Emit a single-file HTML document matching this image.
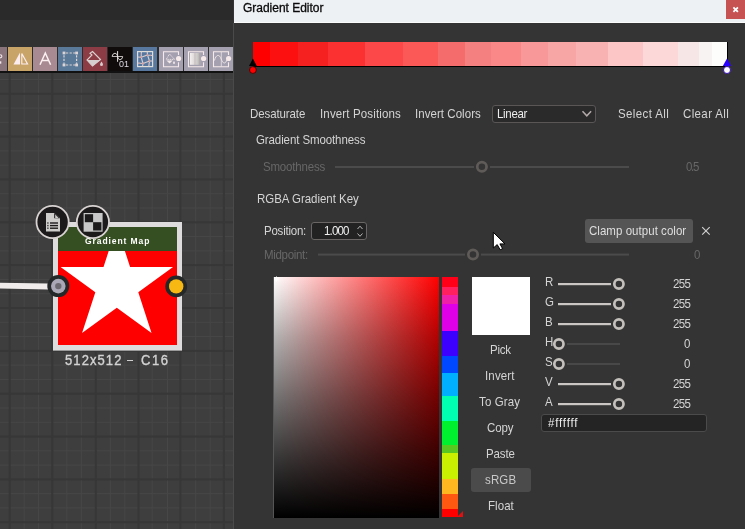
<!DOCTYPE html>
<html><head><meta charset="utf-8"><style>
html,body{margin:0;padding:0;width:745px;height:529px;overflow:hidden;background:#343434;position:relative}
.t{position:absolute;white-space:pre;font-family:"Liberation Sans",sans-serif;will-change:transform}
</style></head><body>
<div style='position:absolute;left:0;top:0;width:233px;height:20px;background:#2b2a2a'></div>
<div style='position:absolute;left:0;top:20px;width:233px;height:27px;background:#323232'></div>
<div style='position:absolute;left:0;top:47px;width:233px;height:24px;background:#2c2c2c'></div>
<div style='position:absolute;left:0;top:71px;width:233px;height:2px;background:#121212'></div>
<svg style='position:absolute;left:0;top:0' width='233' height='529'><rect x='0' y='73' width='233' height='456' fill='#3e3e3e'/><rect x='23.70' y='73' width='1' height='456' fill='#474747'/>
<rect x='38.10' y='73' width='1' height='456' fill='#474747'/>
<rect x='66.30' y='73' width='1' height='456' fill='#474747'/>
<rect x='80.80' y='73' width='1' height='456' fill='#474747'/>
<rect x='109.80' y='73' width='1' height='456' fill='#474747'/>
<rect x='124.30' y='73' width='1' height='456' fill='#474747'/>
<rect x='151.70' y='73' width='1' height='456' fill='#474747'/>
<rect x='167.00' y='73' width='1' height='456' fill='#474747'/>
<rect x='195.20' y='73' width='1' height='456' fill='#474747'/>
<rect x='209.70' y='73' width='1' height='456' fill='#474747'/>
<rect x='0' y='79.02' width='233' height='1' fill='#474747'/>
<rect x='0' y='107.58' width='233' height='1' fill='#474747'/>
<rect x='0' y='121.86' width='233' height='1' fill='#474747'/>
<rect x='0' y='150.42' width='233' height='1' fill='#474747'/>
<rect x='0' y='164.70' width='233' height='1' fill='#474747'/>
<rect x='0' y='193.26' width='233' height='1' fill='#474747'/>
<rect x='0' y='207.54' width='233' height='1' fill='#474747'/>
<rect x='0' y='236.10' width='233' height='1' fill='#474747'/>
<rect x='0' y='250.38' width='233' height='1' fill='#474747'/>
<rect x='0' y='278.94' width='233' height='1' fill='#474747'/>
<rect x='0' y='293.22' width='233' height='1' fill='#474747'/>
<rect x='0' y='321.78' width='233' height='1' fill='#474747'/>
<rect x='0' y='336.06' width='233' height='1' fill='#474747'/>
<rect x='0' y='364.62' width='233' height='1' fill='#474747'/>
<rect x='0' y='378.90' width='233' height='1' fill='#474747'/>
<rect x='0' y='407.46' width='233' height='1' fill='#474747'/>
<rect x='0' y='421.74' width='233' height='1' fill='#474747'/>
<rect x='0' y='450.30' width='233' height='1' fill='#474747'/>
<rect x='0' y='464.58' width='233' height='1' fill='#474747'/>
<rect x='0' y='493.14' width='233' height='1' fill='#474747'/>
<rect x='0' y='507.42' width='233' height='1' fill='#474747'/>
<rect x='8.70' y='73' width='2' height='456' fill='#373737'/>
<rect x='51.30' y='73' width='2' height='456' fill='#373737'/>
<rect x='94.80' y='73' width='2' height='456' fill='#373737'/>
<rect x='137.50' y='73' width='2' height='456' fill='#373737'/>
<rect x='179.40' y='73' width='2' height='456' fill='#373737'/>
<rect x='222.90' y='73' width='2' height='456' fill='#373737'/>
<rect x='0' y='92.80' width='233' height='2' fill='#373737'/>
<rect x='0' y='135.64' width='233' height='2' fill='#373737'/>
<rect x='0' y='178.48' width='233' height='2' fill='#373737'/>
<rect x='0' y='221.32' width='233' height='2' fill='#373737'/>
<rect x='0' y='264.16' width='233' height='2' fill='#373737'/>
<rect x='0' y='307.00' width='233' height='2' fill='#373737'/>
<rect x='0' y='349.84' width='233' height='2' fill='#373737'/>
<rect x='0' y='392.68' width='233' height='2' fill='#373737'/>
<rect x='0' y='435.52' width='233' height='2' fill='#373737'/>
<rect x='0' y='478.36' width='233' height='2' fill='#373737'/>
<rect x='0' y='521.20' width='233' height='2' fill='#373737'/></svg>
<div style='position:absolute;left:-17px;top:47px;width:24px;height:24px;background:#8a747c'></div>
<div style='position:absolute;left:8px;top:47px;width:24px;height:24px;background:#c8a468'></div>
<div style='position:absolute;left:33px;top:47px;width:24px;height:24px;background:#a88a92'></div>
<div style='position:absolute;left:58px;top:47px;width:24px;height:24px;background:#5a7898'></div>
<div style='position:absolute;left:83px;top:47px;width:24px;height:24px;background:#8c3c44'></div>
<div style='position:absolute;left:108px;top:47px;width:24px;height:24px;background:#100c0c'></div>
<div style='position:absolute;left:133px;top:47px;width:24px;height:24px;background:#5878a0'></div>
<div style='position:absolute;left:159px;top:47px;width:24px;height:24px;background:#a4a0b0'></div>
<div style='position:absolute;left:184px;top:47px;width:24px;height:24px;background:#a4a0b0'></div>
<div style='position:absolute;left:209px;top:47px;width:24px;height:24px;background:#a4a0b0'></div>
<svg style='position:absolute;left:0;top:0' width='233' height='75'>
<path d='M0 54.8 q1.9 0 1.9 1.5 q0 1.4 -1.9 1.6' fill='none' stroke='#f4e8ec' stroke-width='1.1'/>
<rect x='0' y='61.3' width='1.3' height='2.4' fill='#f4e8ec'/>
<path d='M20 52.5 L13.5 64.5 L20 64.5 Z' fill='#fbecef'/>
<path d='M21.8 53.5 L21.8 64 L27.5 64 Z' fill='none' stroke='#fbecef' stroke-width='1.2'/>
<path d='M40 64.8 L45.3 53 L50.6 64.8 M42 60.5 H48.6' fill='none' stroke='#fbf0f2' stroke-width='1.5'/>
<g fill='none' stroke='#dcd4d4' stroke-width='1.2'>
 <path d='M66 53 H68.2 M69.6 53 H71.8 M73.2 53 H75 M66 65 H68.2 M69.6 65 H71.8 M73.2 65 H75'/>
 <path d='M64 55.2 V57.4 M64 58.8 V61 M64 62.4 V63.8 M76.6 55.2 V57.4 M76.6 58.8 V61 M76.6 62.4 V63.8'/>
</g>
<g fill='#dcd4d4'><rect x='62.6' y='51.6' width='2.8' height='2.8'/><rect x='75.2' y='51.6' width='2.8' height='2.8'/><rect x='62.6' y='63.6' width='2.8' height='2.8'/><rect x='75.2' y='63.6' width='2.8' height='2.8'/></g>
<path d='M92.5 51.5 L100.5 59.5 L92.5 66 L87 60 L92 55 L90 53.2 Z' fill='none' stroke='#dcd2d2' stroke-width='1.1'/>
<path d='M87 60 H100.5 L92.5 66 Z' fill='#d6d0d0'/>
<path d='M101.5 61.5 q-1.5 2 -1.5 3 a1.5 1.5 0 0 0 3 0 q0 -1 -1.5 -3Z' fill='#d8cccc'/>
<g fill='none' stroke='#e8e2e2' stroke-width='1'>
 <path d='M117.6 51.1 V61.8' />
 <path d='M112.2 56.5 C112.6 52.3 117.2 52.3 117.6 56.5 S122.2 60.7 122.6 56.5' />
 <path d='M112.2 56.5 H122.6' stroke-width='0.8'/>
</g>
<rect x='137.6' y='51.6' width='15' height='15' fill='none' stroke='#e0dcd8' stroke-width='1.2'/>
<g fill='none' stroke='#d8d0d0' stroke-width='1.1'>
 <path d='M141.2 57.2 L147.5 55 L149.5 61 L143 63.5 Z M141.2 57.2 L141.4 51.5 M141.2 57.2 L137.5 57 M147.5 55 L147.2 51.5 M147.5 55 L152.5 55.5 M149.5 61 L152.5 61 M149.5 61 L148.8 66.5 M143 63.5 L142.5 66.5 M143 63.5 L137.5 63'/>
</g>
<g fill='#d89898'><circle cx='141.2' cy='57.2' r='0.9'/><circle cx='147.5' cy='55' r='0.9'/><circle cx='149.5' cy='61' r='0.9'/><circle cx='143' cy='63.5' r='0.9'/><circle cx='141.4' cy='54' r='0.6'/><circle cx='150.5' cy='55.3' r='0.6'/><circle cx='149' cy='64' r='0.6'/><circle cx='139.5' cy='63.2' r='0.6'/></g>
<g fill='none' stroke='#f6eaea' stroke-width='1.1'>
 <path d='M178.5 55 V51.7 H163.5 V66.8 H178.5 V62.3'/>
 <path d='M203.5 55 V51.7 H188.5 V66.8 H203.5 V62.3'/>
 <path d='M228.5 55 V51.7 H213.5 V66.8 H228.5 V62.3'/>
</g>
<g fill='#f6eaea'><circle cx='178.6' cy='58.5' r='2.6'/><circle cx='203.6' cy='58.5' r='2.6'/><circle cx='228.6' cy='58.5' r='2.6'/></g>
<path d='M169.5 54 L174.6 59.4 H166.2 Z' fill='none' stroke='#f0e6e6' stroke-width='0.9' stroke-dasharray='1.2 0.6'/>
<path d='M166.4 60.4 H172.6 L169.6 63.6 Z' fill='#f4eaea'/>
<rect x='173.1' y='61.6' width='1.8' height='2.2' fill='#f0e6e6'/>
<defs><linearGradient id='gg' x1='0' x2='1'><stop offset='0' stop-color='#f4f0f0'/><stop offset='0.35' stop-color='#e2dcdc'/><stop offset='0.48' stop-color='#c6bebe'/><stop offset='0.58' stop-color='#d2d0d0'/><stop offset='0.78' stop-color='#c8c4c4'/><stop offset='0.92' stop-color='#aeaaaa'/><stop offset='1' stop-color='#bcb8b8'/></linearGradient></defs>
<rect x='190' y='53' width='10.3' height='11.8' fill='url(#gg)'/>
<g fill='none' stroke='#ece4e4' stroke-width='1'>
 <path d='M221.3 51.8 V66.5' stroke-width='0.8'/>
 <path d='M214.5 60.5 C216 54 219.5 54 221.2 59 S225.5 64.5 227 59.5'/>
</g>
</svg>
<svg style='position:absolute;left:0;top:0' width='233' height='529'><path d='M0 282.8 L48 283.6 L48 289.4 L0 288.4 Z' fill='#f0ecec'/><rect x='53' y='222' width='129' height='128.6' fill='#dedcdc'/><rect x='58' y='227' width='119' height='24' fill='#364f22'/><rect x='58' y='251' width='119' height='94' fill='#ff0000'/><clipPath id='cr'><rect x='58' y='251' width='119' height='94'/></clipPath><polygon clip-path='url(#cr)' fill='#ffffff' points='116.80,226.10 130.07,266.94 173.01,266.94 138.27,292.18 151.54,333.01 116.80,307.78 82.06,333.01 95.33,292.18 60.59,266.94 103.53,266.94'/><circle cx='58.3' cy='286.1' r='11' fill='#252828'/><circle cx='58.3' cy='286.1' r='7.3' fill='#aaa8b6'/><circle cx='58.3' cy='286.1' r='3.2' fill='#6c6a70'/><circle cx='176.2' cy='286.4' r='10.9' fill='#242828'/><circle cx='176.2' cy='286.4' r='7.2' fill='#f8b814'/><circle cx='52.6' cy='222' r='16.1' fill='#1c1a1a' stroke='#d8d2d2' stroke-width='1.8'/><circle cx='92.9' cy='222' r='16.1' fill='#1c1a1a' stroke='#d8d2d2' stroke-width='1.8'/><path d='M46 213 H54.2 L60 218.3 V231.5 H46 Z' fill='#cfcccc'/><path d='M54.2 213 V218.3 H60 Z' fill='#1c1a1a'/><path d='M55.2 214.5 L58.6 218 H55.2 Z' fill='#cfcccc'/><g fill='#1c1a1a'><rect x='50' y='222.3' width='8' height='1.4'/><rect x='50' y='224.9' width='8' height='1.4'/><rect x='50' y='227.5' width='8' height='1.4'/><rect x='47.3' y='222.3' width='1.2' height='1.4'/><rect x='47.3' y='224.9' width='1.2' height='1.4'/><rect x='47.3' y='227.5' width='1.2' height='1.4'/></g><rect x='83.6' y='213' width='19' height='18.7' fill='#c8c8c8'/><rect x='84.8' y='214.2' width='8.3' height='8' fill='#1c1a1a'/><rect x='93.1' y='222.2' width='8.3' height='8.3' fill='#1c1a1a'/></svg>
<div style='position:absolute;left:127.1px;top:359.7px;width:6.2px;height:1.5px;background:#cfcfcf'></div>
<div style='position:absolute;left:233px;top:23px;width:1px;height:506px;background:#4a4a4a'></div>
<div style='position:absolute;left:234px;top:23px;width:511px;height:506px;background:#343434'></div>
<div style='position:absolute;left:234px;top:0;width:511px;height:22px;background:#eef1f4'></div>
<div style='position:absolute;left:234px;top:22px;width:511px;height:1px;background:#fbfbfb'></div>
<div style='position:absolute;left:726px;top:0;width:19px;height:19px;background:#c75252'></div>
<svg style='position:absolute;left:726px;top:0' width='19' height='19'><path d='M7.4 7.4 L11.9 11.9 M11.9 7.4 L7.4 11.9' stroke='#ffffff' stroke-width='1.8' fill='none'/></svg>
<div style='position:absolute;left:253px;top:42px;width:17px;height:24px;background:#ff0000'></div>
<div style='position:absolute;left:270px;top:42px;width:28px;height:24px;background:#fc1010'></div>
<div style='position:absolute;left:298px;top:42px;width:30px;height:24px;background:#f52020'></div>
<div style='position:absolute;left:328px;top:42px;width:37px;height:24px;background:#fb3030'></div>
<div style='position:absolute;left:365px;top:42px;width:38px;height:24px;background:#fc4848'></div>
<div style='position:absolute;left:403px;top:42px;width:35px;height:24px;background:#fb5858'></div>
<div style='position:absolute;left:438px;top:42px;width:27px;height:24px;background:#f56c6c'></div>
<div style='position:absolute;left:465px;top:42px;width:26px;height:24px;background:#f58080'></div>
<div style='position:absolute;left:491px;top:42px;width:30px;height:24px;background:#fa8888'></div>
<div style='position:absolute;left:521px;top:42px;width:27px;height:24px;background:#f89898'></div>
<div style='position:absolute;left:548px;top:42px;width:28px;height:24px;background:#f8a5a5'></div>
<div style='position:absolute;left:576px;top:42px;width:32px;height:24px;background:#f8b2b2'></div>
<div style='position:absolute;left:608px;top:42px;width:35px;height:24px;background:#fcc6c6'></div>
<div style='position:absolute;left:643px;top:42px;width:35px;height:24px;background:#fdd8d8'></div>
<div style='position:absolute;left:678px;top:42px;width:21px;height:24px;background:#f6e6e6'></div>
<div style='position:absolute;left:699px;top:42px;width:13px;height:24px;background:#f8f3f3'></div>
<div style='position:absolute;left:712px;top:42px;width:15px;height:24px;background:#fdfdfc'></div>
<div style='position:absolute;left:253px;top:66px;width:475px;height:1px;background:#000'></div>
<div style='position:absolute;left:727px;top:42px;width:1px;height:25px;background:#000'></div>
<div style='position:absolute;left:492px;top:105px;width:101.5px;height:15.5px;border:1px solid #5a5656;border-radius:3px;background:#2a2a2a'></div>
<div style='position:absolute;left:311px;top:222px;width:53.5px;height:15.5px;border:1px solid #6a6666;border-radius:3px;background:#222222'></div>
<div style='position:absolute;left:585px;top:219px;width:107.7px;height:23.8px;border-radius:3px;background:#555555'></div>
<div style='position:absolute;left:541px;top:414px;width:164px;height:15.5px;border:1px solid #4b4b4b;border-radius:3px;background:#242424'></div>
<div style='position:absolute;left:471px;top:468px;width:60px;height:24px;border-radius:3px;background:#4b4b4b'></div>
<svg style='position:absolute;left:234px;top:23px' width='511' height='506'><g transform='translate(-234,-23)'><path d='M252.9 58.6 L256.8 66 L249 66 Z' fill='#000'/><circle cx='252.9' cy='70' r='3.4' fill='#ff0000' stroke='#3a0000' stroke-width='0.8'/><path d='M727 58.6 L731.2 66 L722.8 66 Z' fill='#2a00ff'/><circle cx='727' cy='70' r='3.5' fill='#ffffff' stroke='#2a00c0' stroke-width='0.9'/><rect x='335' y='166' width='139' height='2' fill='#4b4b4b'/><rect x='490' y='166' width='139' height='2' fill='#4b4b4b'/><circle cx='481.9' cy='166.8' r='4.65' fill='none' stroke='#5f5b58' stroke-width='2.7'/><rect x='318' y='253.6' width='147' height='2' fill='#4b4b4b'/><rect x='481' y='253.6' width='148' height='2' fill='#4b4b4b'/><circle cx='473' cy='254.5' r='4.65' fill='none' stroke='#5f5b58' stroke-width='2.7'/><rect x='558' y='283' width='53' height='2.2' fill='#c9c6c3'/><circle cx='618.9' cy='284' r='4.6' fill='none' stroke='#c4c0bc' stroke-width='2.7'/><rect x='558' y='303' width='53' height='2.2' fill='#c9c6c3'/><circle cx='618.9' cy='304' r='4.6' fill='none' stroke='#c4c0bc' stroke-width='2.7'/><rect x='558' y='323' width='53' height='2.2' fill='#c9c6c3'/><circle cx='618.9' cy='324' r='4.6' fill='none' stroke='#c4c0bc' stroke-width='2.7'/><rect x='558' y='383' width='53' height='2.2' fill='#c9c6c3'/><circle cx='618.9' cy='384' r='4.6' fill='none' stroke='#c4c0bc' stroke-width='2.7'/><rect x='558' y='403' width='53' height='2.2' fill='#c9c6c3'/><circle cx='618.9' cy='404' r='4.6' fill='none' stroke='#c4c0bc' stroke-width='2.7'/><rect x='567' y='343' width='53' height='2' fill='#484848'/><circle cx='558.9' cy='344' r='4.6' fill='none' stroke='#c4c0bc' stroke-width='2.7'/><rect x='567' y='363' width='53' height='2' fill='#484848'/><circle cx='558.9' cy='364' r='4.6' fill='none' stroke='#c4c0bc' stroke-width='2.7'/><path d='M357.5 229 L360 226.2 L362.5 229' fill='none' stroke='#b8b8b8' stroke-width='1'/><path d='M357.5 233.5 L360 236.3 L362.5 233.5' fill='none' stroke='#b8b8b8' stroke-width='1'/><path d='M582.5 111.2 L586.8 115.8 L591.1 111.2' fill='none' stroke='#b4aaaa' stroke-width='1.5'/><path d='M702.2 227.2 L709.7 234.7 M709.7 227.2 L702.2 234.7' stroke='#cfcfcf' stroke-width='1.2' fill='none'/><path d='M493.3 232.3 L493.3 248 L497.2 244.6 L500.2 249.8 L502.6 248.6 L499.9 243.9 L505 243.9 Z' fill='#ffffff' stroke='#000' stroke-width='1'/></g></svg>
<div style='position:absolute;left:273px;top:277px;width:1px;height:241px;background:#555'></div>
<div style='position:absolute;left:274px;top:277px;width:165px;height:241px;background:linear-gradient(to bottom,rgba(0,0,0,0) 0%,rgba(0,0,0,0.3) 25%,rgba(0,0,0,0.55) 50%,rgba(0,0,0,0.78) 75%,#000 100%),linear-gradient(to right,#fff,#f00)'></div>
<svg style='position:absolute;left:272px;top:275px' width='8' height='8'><path d='M2 4 H7 M4.5 1.5 V6.5 M2.8 2.3 L6.2 5.7 M6.2 2.3 L2.8 5.7' stroke='#fff' stroke-width='1'/></svg>
<div style='position:absolute;left:442px;top:277px;width:16px;height:10px;background:#ff0018'></div>
<div style='position:absolute;left:442px;top:287px;width:16px;height:8px;background:#ff2060'></div>
<div style='position:absolute;left:442px;top:295px;width:16px;height:9px;background:#f020a8'></div>
<div style='position:absolute;left:442px;top:304px;width:16px;height:27px;background:#e000e8'></div>
<div style='position:absolute;left:442px;top:331px;width:16px;height:25px;background:#3c00ff'></div>
<div style='position:absolute;left:442px;top:356px;width:16px;height:17px;background:#0048ff'></div>
<div style='position:absolute;left:442px;top:373px;width:16px;height:23px;background:#00b0ff'></div>
<div style='position:absolute;left:442px;top:396px;width:16px;height:25px;background:#00ffb0'></div>
<div style='position:absolute;left:442px;top:421px;width:16px;height:24px;background:#00f030'></div>
<div style='position:absolute;left:442px;top:445px;width:16px;height:8px;background:#58c820'></div>
<div style='position:absolute;left:442px;top:453px;width:16px;height:26px;background:#c8f000'></div>
<div style='position:absolute;left:442px;top:479px;width:16px;height:15px;background:#ffb820'></div>
<div style='position:absolute;left:442px;top:494px;width:16px;height:15px;background:#ff5810'></div>
<div style='position:absolute;left:442px;top:509px;width:16px;height:8px;background:#ff0000'></div>
<svg style='position:absolute;left:456px;top:510px' width='8' height='8'><path d='M7 1 L7 7 L1 7 Z' fill='#e01010'/></svg>
<div style='position:absolute;left:472px;top:277px;width:58px;height:58px;background:#ffffff'></div>
<div class='t' style='left:242.70px;top:2.44px;font-size:12px;line-height:12px;color:#0a0a0a;letter-spacing:-0.016px;font-weight:normal;font-family:"Liberation Sans",sans-serif;-webkit-text-stroke:0.3px #0a0a0a'>Gradient Editor</div>
<div class='t' style='transform:scaleY(1.09);transform-origin:0 9.73px;left:250.20px;top:108.87px;font-size:11.5px;line-height:11.5px;color:#d4d4d4;letter-spacing:-0.107px;font-weight:normal;font-family:"Liberation Sans",sans-serif;'>Desaturate</div>
<div class='t' style='transform:scaleY(1.09);transform-origin:0 9.73px;left:320.10px;top:108.87px;font-size:11.5px;line-height:11.5px;color:#d4d4d4;letter-spacing:0.145px;font-weight:normal;font-family:"Liberation Sans",sans-serif;'>Invert Positions</div>
<div class='t' style='transform:scaleY(1.09);transform-origin:0 9.73px;left:415.20px;top:108.87px;font-size:11.5px;line-height:11.5px;color:#d4d4d4;letter-spacing:0.051px;font-weight:normal;font-family:"Liberation Sans",sans-serif;'>Invert Colors</div>
<div class='t' style='transform:scaleY(1.09);transform-origin:0 9.73px;left:497.20px;top:108.57px;font-size:11.5px;line-height:11.5px;color:#ececec;letter-spacing:-0.314px;font-weight:normal;font-family:"Liberation Sans",sans-serif;'>Linear</div>
<div class='t' style='transform:scaleY(1.09);transform-origin:0 9.73px;left:618.00px;top:108.87px;font-size:11.5px;line-height:11.5px;color:#d4d4d4;letter-spacing:0.387px;font-weight:normal;font-family:"Liberation Sans",sans-serif;'>Select All</div>
<div class='t' style='transform:scaleY(1.09);transform-origin:0 9.73px;left:683.20px;top:108.87px;font-size:11.5px;line-height:11.5px;color:#d4d4d4;letter-spacing:0.371px;font-weight:normal;font-family:"Liberation Sans",sans-serif;'>Clear All</div>
<div class='t' style='transform:scaleY(1.09);transform-origin:0 9.73px;left:256.20px;top:134.87px;font-size:11.5px;line-height:11.5px;color:#d4d4d4;letter-spacing:-0.102px;font-weight:normal;font-family:"Liberation Sans",sans-serif;'>Gradient Smoothness</div>
<div class='t' style='transform:scaleY(1.09);transform-origin:0 9.73px;left:263.20px;top:161.87px;font-size:11.5px;line-height:11.5px;color:#676767;letter-spacing:-0.193px;font-weight:normal;font-family:"Liberation Sans",sans-serif;'>Smoothness</div>
<div class='t' style='transform:scaleY(1.09);transform-origin:0 9.73px;left:685.90px;top:161.87px;font-size:11.5px;line-height:11.5px;color:#676767;letter-spacing:-1.350px;font-weight:normal;font-family:"Liberation Sans",sans-serif;'>0.5</div>
<div class='t' style='transform:scaleY(1.09);transform-origin:0 9.73px;left:256.90px;top:194.47px;font-size:11.5px;line-height:11.5px;color:#d4d4d4;letter-spacing:-0.030px;font-weight:normal;font-family:"Liberation Sans",sans-serif;'>RGBA Gradient Key</div>
<div class='t' style='transform:scaleY(1.09);transform-origin:0 9.73px;left:264.40px;top:225.67px;font-size:11.5px;line-height:11.5px;color:#d4d4d4;letter-spacing:-0.226px;font-weight:normal;font-family:"Liberation Sans",sans-serif;'>Position:</div>
<div class='t' style='transform:scaleY(1.09);transform-origin:0 9.73px;left:324.40px;top:225.67px;font-size:11.5px;line-height:11.5px;color:#f0f0f0;letter-spacing:-0.820px;font-weight:normal;font-family:"Liberation Sans",sans-serif;'>1.000</div>
<div class='t' style='transform:scaleY(1.09);transform-origin:0 9.73px;left:589.20px;top:225.87px;font-size:11.5px;line-height:11.5px;color:#dedede;letter-spacing:0.039px;font-weight:normal;font-family:"Liberation Sans",sans-serif;'>Clamp output color</div>
<div class='t' style='transform:scaleY(1.09);transform-origin:0 9.73px;left:264.40px;top:249.67px;font-size:11.5px;line-height:11.5px;color:#676767;letter-spacing:-0.309px;font-weight:normal;font-family:"Liberation Sans",sans-serif;'>Midpoint:</div>
<div class='t' style='transform:scaleY(1.09);transform-origin:0 9.73px;left:694.40px;top:249.87px;font-size:11.5px;line-height:11.5px;color:#676767;letter-spacing:0.000px;font-weight:normal;font-family:"Liberation Sans",sans-serif;'>0</div>
<div class='t' style='transform:scaleY(1.09);transform-origin:0 9.73px;left:490.30px;top:344.87px;font-size:11.5px;line-height:11.5px;color:#d4d4d4;letter-spacing:-0.211px;font-weight:normal;font-family:"Liberation Sans",sans-serif;'>Pick</div>
<div class='t' style='transform:scaleY(1.09);transform-origin:0 9.73px;left:485.40px;top:370.87px;font-size:11.5px;line-height:11.5px;color:#d4d4d4;letter-spacing:0.147px;font-weight:normal;font-family:"Liberation Sans",sans-serif;'>Invert</div>
<div class='t' style='transform:scaleY(1.09);transform-origin:0 9.73px;left:479.30px;top:396.87px;font-size:11.5px;line-height:11.5px;color:#d4d4d4;letter-spacing:0.139px;font-weight:normal;font-family:"Liberation Sans",sans-serif;'>To Gray</div>
<div class='t' style='transform:scaleY(1.09);transform-origin:0 9.73px;left:486.60px;top:422.87px;font-size:11.5px;line-height:11.5px;color:#d4d4d4;letter-spacing:-0.153px;font-weight:normal;font-family:"Liberation Sans",sans-serif;'>Copy</div>
<div class='t' style='transform:scaleY(1.09);transform-origin:0 9.73px;left:485.90px;top:448.87px;font-size:11.5px;line-height:11.5px;color:#d4d4d4;letter-spacing:-0.105px;font-weight:normal;font-family:"Liberation Sans",sans-serif;'>Paste</div>
<div class='t' style='transform:scaleY(1.09);transform-origin:0 9.73px;left:485.10px;top:474.87px;font-size:11.5px;line-height:11.5px;color:#c8c8c8;letter-spacing:0.143px;font-weight:normal;font-family:"Liberation Sans",sans-serif;'>sRGB</div>
<div class='t' style='transform:scaleY(1.09);transform-origin:0 9.73px;left:488.00px;top:500.87px;font-size:11.5px;line-height:11.5px;color:#d4d4d4;letter-spacing:0.055px;font-weight:normal;font-family:"Liberation Sans",sans-serif;'>Float</div>
<div class='t' style='transform:scaleY(1.09);transform-origin:0 9.73px;left:545.20px;top:276.87px;font-size:11.5px;line-height:11.5px;color:#d4d4d4;letter-spacing:0.000px;font-weight:normal;font-family:"Liberation Sans",sans-serif;'>R</div>
<div class='t' style='transform:scaleY(1.09);transform-origin:0 9.73px;left:673.10px;top:279.17px;font-size:11.5px;line-height:11.5px;color:#d4d4d4;letter-spacing:-0.694px;font-weight:normal;font-family:"Liberation Sans",sans-serif;'>255</div>
<div class='t' style='transform:scaleY(1.09);transform-origin:0 9.73px;left:545.20px;top:296.87px;font-size:11.5px;line-height:11.5px;color:#d4d4d4;letter-spacing:0.000px;font-weight:normal;font-family:"Liberation Sans",sans-serif;'>G</div>
<div class='t' style='transform:scaleY(1.09);transform-origin:0 9.73px;left:673.10px;top:299.17px;font-size:11.5px;line-height:11.5px;color:#d4d4d4;letter-spacing:-0.694px;font-weight:normal;font-family:"Liberation Sans",sans-serif;'>255</div>
<div class='t' style='transform:scaleY(1.09);transform-origin:0 9.73px;left:545.20px;top:316.87px;font-size:11.5px;line-height:11.5px;color:#d4d4d4;letter-spacing:0.000px;font-weight:normal;font-family:"Liberation Sans",sans-serif;'>B</div>
<div class='t' style='transform:scaleY(1.09);transform-origin:0 9.73px;left:673.10px;top:319.17px;font-size:11.5px;line-height:11.5px;color:#d4d4d4;letter-spacing:-0.694px;font-weight:normal;font-family:"Liberation Sans",sans-serif;'>255</div>
<div class='t' style='transform:scaleY(1.09);transform-origin:0 9.73px;left:545.20px;top:336.87px;font-size:11.5px;line-height:11.5px;color:#d4d4d4;letter-spacing:0.000px;font-weight:normal;font-family:"Liberation Sans",sans-serif;'>H</div>
<div class='t' style='transform:scaleY(1.09);transform-origin:0 9.73px;left:684.49px;top:339.17px;font-size:11.5px;line-height:11.5px;color:#d4d4d4;letter-spacing:0.000px;font-weight:normal;font-family:"Liberation Sans",sans-serif;'>0</div>
<div class='t' style='transform:scaleY(1.09);transform-origin:0 9.73px;left:545.20px;top:356.87px;font-size:11.5px;line-height:11.5px;color:#d4d4d4;letter-spacing:0.000px;font-weight:normal;font-family:"Liberation Sans",sans-serif;'>S</div>
<div class='t' style='transform:scaleY(1.09);transform-origin:0 9.73px;left:684.49px;top:359.17px;font-size:11.5px;line-height:11.5px;color:#d4d4d4;letter-spacing:0.000px;font-weight:normal;font-family:"Liberation Sans",sans-serif;'>0</div>
<div class='t' style='transform:scaleY(1.09);transform-origin:0 9.73px;left:545.20px;top:376.87px;font-size:11.5px;line-height:11.5px;color:#d4d4d4;letter-spacing:0.000px;font-weight:normal;font-family:"Liberation Sans",sans-serif;'>V</div>
<div class='t' style='transform:scaleY(1.09);transform-origin:0 9.73px;left:673.10px;top:379.17px;font-size:11.5px;line-height:11.5px;color:#d4d4d4;letter-spacing:-0.694px;font-weight:normal;font-family:"Liberation Sans",sans-serif;'>255</div>
<div class='t' style='transform:scaleY(1.09);transform-origin:0 9.73px;left:545.20px;top:396.87px;font-size:11.5px;line-height:11.5px;color:#d4d4d4;letter-spacing:0.000px;font-weight:normal;font-family:"Liberation Sans",sans-serif;'>A</div>
<div class='t' style='transform:scaleY(1.09);transform-origin:0 9.73px;left:673.10px;top:399.17px;font-size:11.5px;line-height:11.5px;color:#d4d4d4;letter-spacing:-0.694px;font-weight:normal;font-family:"Liberation Sans",sans-serif;'>255</div>
<div class='t' style='transform:scaleY(1.09);transform-origin:0 9.73px;left:548.20px;top:417.57px;font-size:11.5px;line-height:11.5px;color:#ececec;letter-spacing:0.828px;font-weight:normal;font-family:"Liberation Sans",sans-serif;'>#ffffff</div>
<div class='t' style='transform:scaleY(1.1);transform-origin:0 11.00px;left:65.00px;top:353.90px;font-size:13px;line-height:13px;color:#d2d2d2;letter-spacing:1.085px;font-weight:normal;font-family:"Liberation Sans",sans-serif;-webkit-text-stroke:0.35px #d2d2d2'>512x512</div>
<div class='t' style='transform:scaleY(1.1);transform-origin:0 11.00px;left:140.60px;top:353.90px;font-size:13px;line-height:13px;color:#d2d2d2;letter-spacing:1.620px;font-weight:normal;font-family:"Liberation Sans",sans-serif;-webkit-text-stroke:0.35px #d2d2d2'>C16</div>
<div class='t' style='left:119.10px;top:60.18px;font-size:9px;line-height:9px;color:#dcd8e0;letter-spacing:0.000px;font-weight:normal;font-family:"Liberation Sans",sans-serif;'>01</div>
<div class='t' style='left:84.60px;top:236.90px;font-size:8.5px;line-height:8.5px;color:#ffffff;letter-spacing:0.917px;font-weight:bold;font-family:"Liberation Sans",sans-serif;'>Gradient Map</div>
</body></html>
